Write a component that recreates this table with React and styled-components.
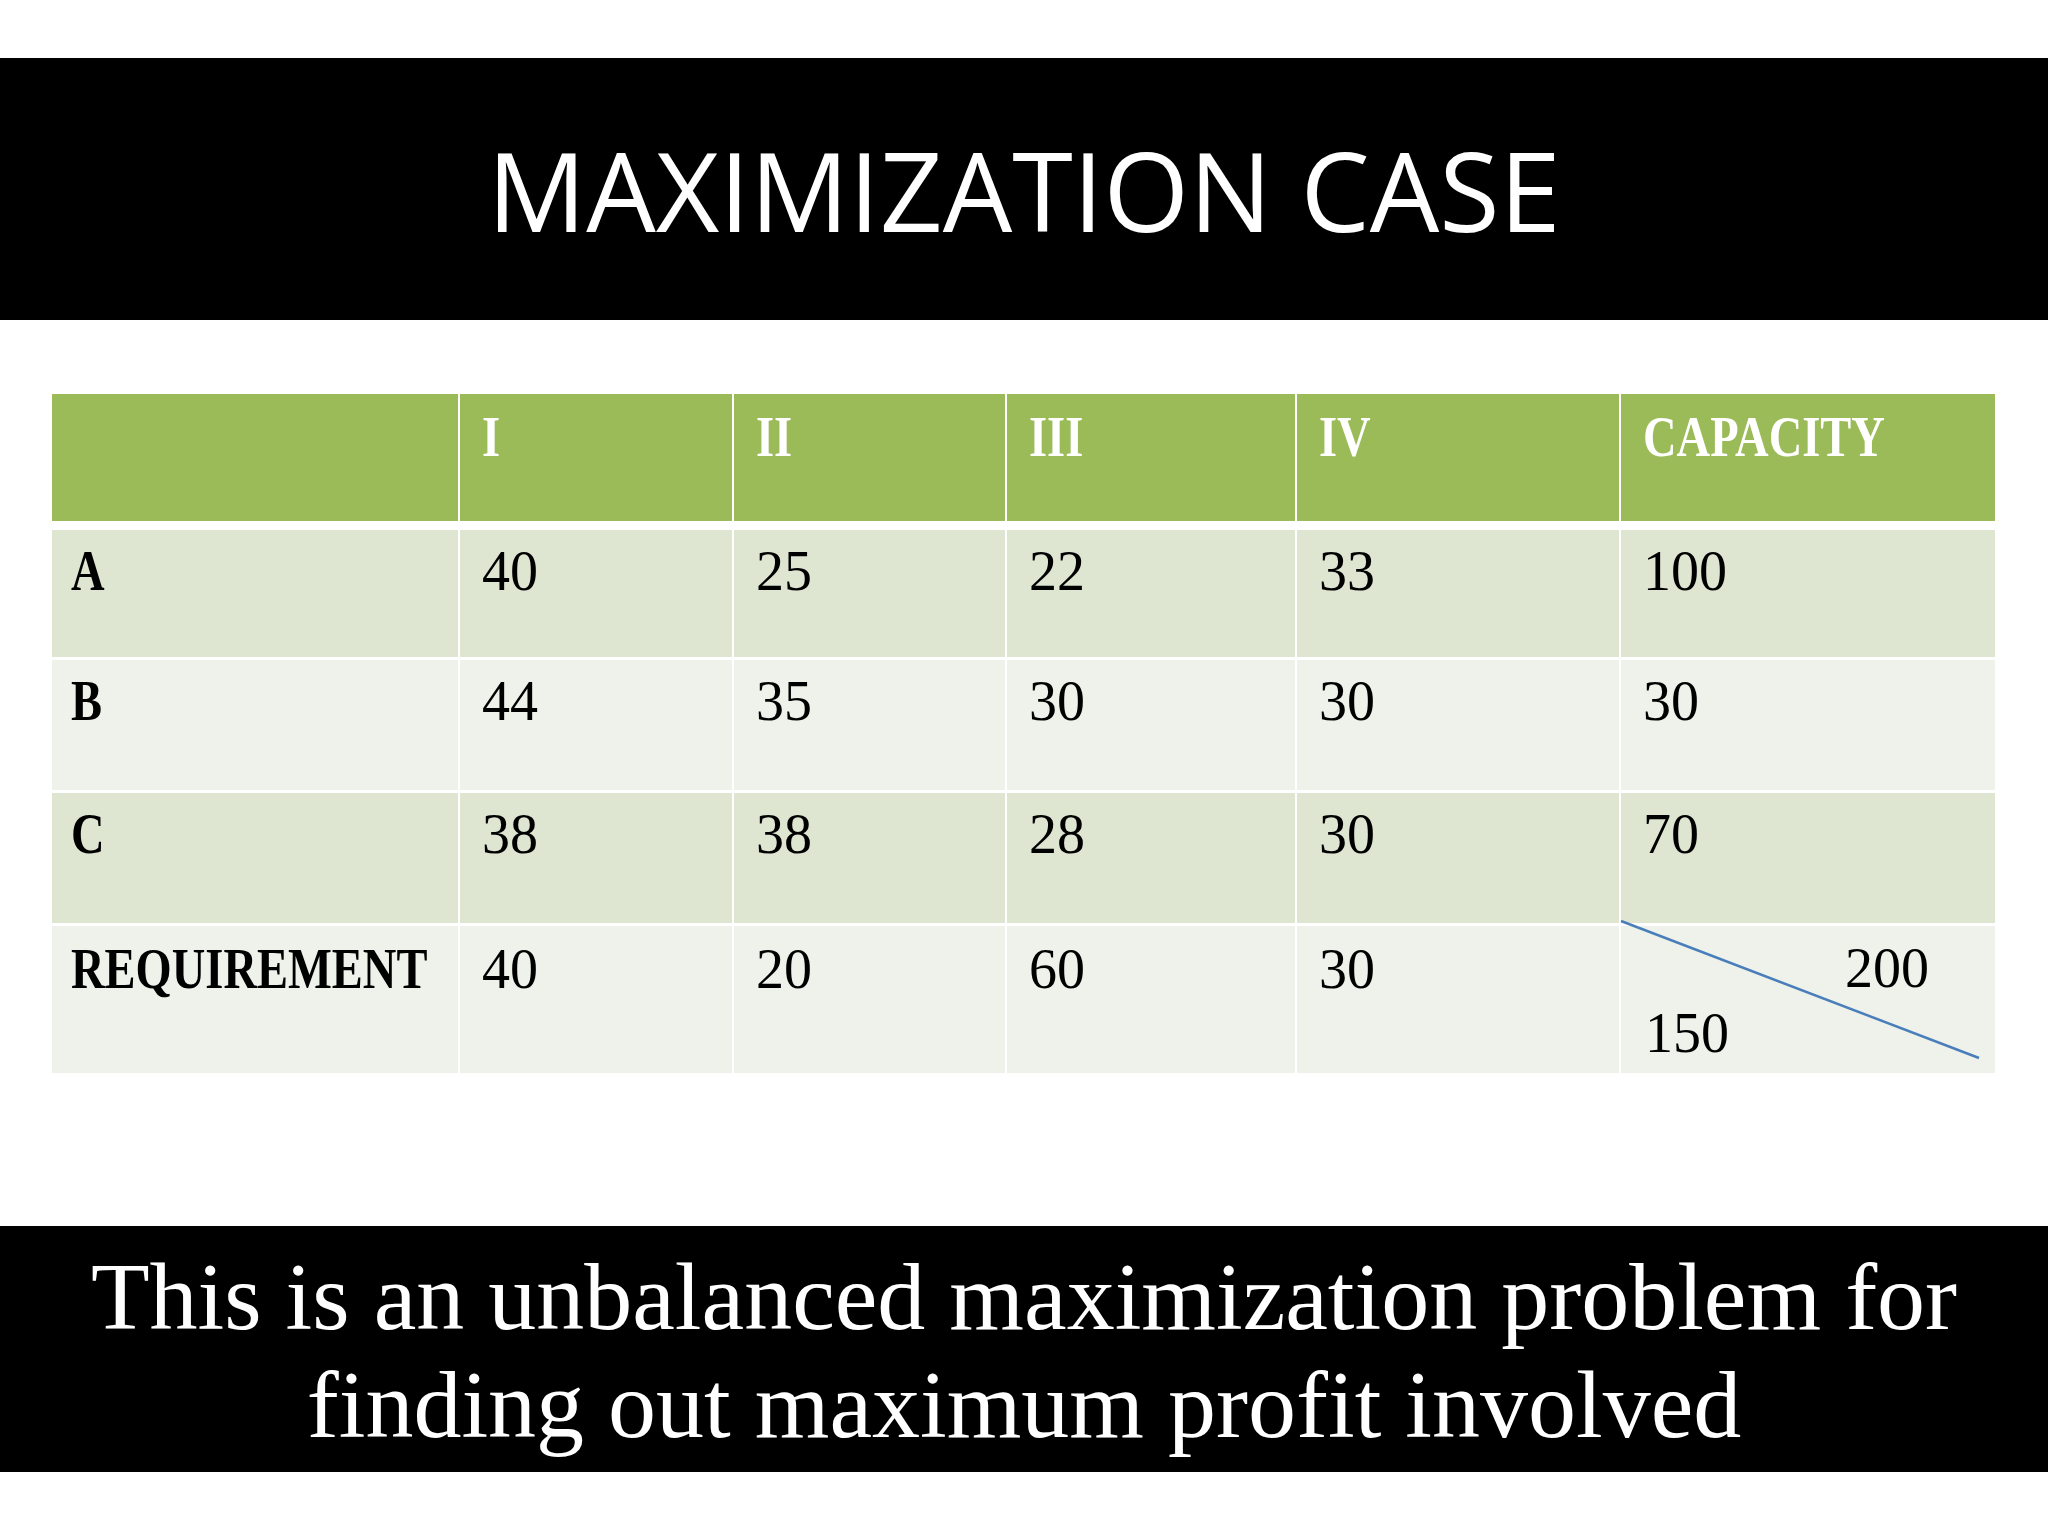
import React from "react";
import styled, { createGlobalStyle } from "styled-components";

const GlobalStyle = createGlobalStyle`
  html, body {
    margin: 0;
    padding: 0;
    background: #ffffff;
  }
`;

const columns = ["I", "II", "III", "IV", "CAPACITY"];

const rows = [
  { label: "A", values: ["40", "25", "22", "33", "100"], tone: "band1", height: 127 },
  { label: "B", values: ["44", "35", "30", "30", "30"], tone: "band2", height: 130 },
  { label: "C", values: ["38", "38", "28", "30", "70"], tone: "band1", height: 130 },
];

const requirement = ["40", "20", "60", "30"];

const App = () => {
  return (
    <>
      <GlobalStyle />
      <Slide>
        <TitleBand>
          <Title>MAXIMIZATION CASE</Title>
        </TitleBand>

        <Table>
          <Row $h={127} $header>
            <Cell $tone="head" $first $pt={15} />
            {columns.map(col => (
              <Cell key={col} $tone="head" $pt={15}>
                <Strong $light>{col}</Strong>
              </Cell>
            ))}
          </Row>

          {rows.map(row => (
            <Row key={row.label} $h={row.height}>
              <Cell $tone={row.tone} $first $pt={13}>
                <Strong>{row.label}</Strong>
              </Cell>
              {row.values.map((v, i) => (
                <Cell key={i} $tone={row.tone} $pt={13}>
                  {v}
                </Cell>
              ))}
            </Row>
          ))}

          <Row $h={147}>
            <Cell $tone="band2" $first $pt={15}>
              <Strong>REQUIREMENT</Strong>
            </Cell>
            {requirement.map((v, i) => (
              <Cell key={i} $tone="band2" $pt={15}>
                {v}
              </Cell>
            ))}
            <DiagonalCell>
              <Diagonal viewBox="0 0 358 137" width="358" height="137">
                <line x1="0" y1="0" x2="358" y2="137" stroke="#4a7ebb" strokeWidth="2.5" />
              </Diagonal>
              <CellLine $align="right">200</CellLine>
              <CellLine $align="left">150</CellLine>
            </DiagonalCell>
          </Row>
        </Table>

        <Footer>
          <Caption>
            This is an unbalanced maximization problem for
            <br />
            finding out maximum profit involved
          </Caption>
        </Footer>
      </Slide>
    </>
  );
};

export default App;

const tones = {
  head: "#9bbb59",
  band1: "#dee6d2",
  band2: "#eef2ea",
};

const Slide = styled.div`
  width: 2048px;
  height: 1536px;
  box-sizing: border-box;
  padding-top: 58px;
  background: #ffffff;
  display: flex;
  flex-direction: column;
  overflow: hidden;
`;

const TitleBand = styled.header`
  height: 262px;
  background: #000000;
  display: flex;
  align-items: center;
  justify-content: center;
`;

const Title = styled.h1`
  margin: 0;
  font-family: "Open Sans", "Noto Sans", sans-serif;
  font-weight: 400;
  font-size: 110px;
  line-height: 1;
  color: #ffffff;
`;

const Table = styled.div`
  margin: 74px 0 0 52px;
  width: 1943px;
  display: flex;
  flex-direction: column;
  gap: 3px;
`;

const Row = styled.div`
  display: grid;
  grid-template-columns: 406px 272px 271px 288px 322px 374px;
  column-gap: 2px;
  height: ${props => props.$h}px;
  margin-bottom: ${props => (props.$header ? 6 : 0)}px;
`;

const Cell = styled.div`
  position: relative;
  box-sizing: border-box;
  background: ${props => tones[props.$tone]};
  padding: ${props => props.$pt}px 0 0 ${props => (props.$first ? 19 : 22)}px;
  font-family: "Liberation Serif", "Times New Roman", serif;
  font-size: 56px;
  line-height: 1;
  color: #000000;
  white-space: nowrap;
`;

const Strong = styled.span`
  display: inline-block;
  font-weight: 700;
  font-size: 56px;
  transform: scaleX(0.83);
  transform-origin: left center;
  color: ${props => (props.$light ? "#ffffff" : "#000000")};
`;

const DiagonalCell = styled.div`
  position: relative;
  box-sizing: border-box;
  background: ${tones.band2};
  padding: 10px 66px 0 24px;
  font-family: "Liberation Serif", "Times New Roman", serif;
  font-size: 56px;
  line-height: 65px;
  color: #000000;
`;

const CellLine = styled.div`
  text-align: ${props => props.$align};
`;

const Diagonal = styled.svg`
  position: absolute;
  left: 0;
  top: -5px;
  overflow: visible;
`;

const Footer = styled.footer`
  margin-top: 153px;
  height: 246px;
  background: #000000;
  display: flex;
  align-items: center;
  justify-content: center;
`;

const Caption = styled.p`
  margin: 0;
  padding-top: 4px;
  font-family: "Liberation Serif", "Times New Roman", serif;
  font-size: 96px;
  line-height: 108px;
  color: #ffffff;
  text-align: center;
`;
